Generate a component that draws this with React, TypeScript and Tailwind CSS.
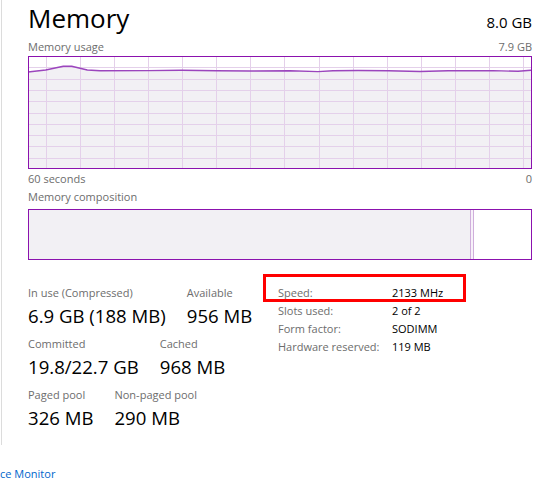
const usage: [number, number][] = [
  [0, 16],
  [17.7, 14],
  [35.3, 10.2],
  [43.7, 10.3],
  [59.3, 14],
  [72, 14.7],
  [120, 14.6],
  [153.7, 14.3],
  [188.7, 14.7],
  [222, 15],
  [262, 14.7],
  [290, 15.6],
  [305, 14.7],
  [330, 14.5],
  [360, 14.8],
  [392, 15.5],
  [420, 14.7],
  [465, 14.6],
  [490, 15.3],
  [503, 14.3],
];

const W = 504;
const H = 113;

function UsageGraph() {
  const line = usage.map(([x, y]) => `${x},${y}`).join(" ");
  const fill = `M${usage.map(([x, y]) => `${x},${y}`).join(" L")} L${W},${H} L0,${H} Z`;
  const rows = Array.from({ length: 9 }, (_, i) => Math.round(11.3 * (i + 1)) + 0.5);
  const cols = Array.from({ length: 15 }, (_, i) => Math.round(17.7 + 34.1 * i) + 0.5);
  return (
    <svg width={W} height={H} viewBox={`0 0 ${W} ${H}`} className="block">
      <path d={fill} fill="#f2f0f4" />
      {rows.map((y) => (
        <line key={`r${y}`} x1={0} x2={W} y1={y} y2={y} stroke="#e4d0ea" strokeWidth={1} />
      ))}
      {cols.map((x) => (
        <line key={`c${x}`} x1={x} x2={x} y1={0} y2={H} stroke="#e4d0ea" strokeWidth={1} />
      ))}
      <polyline points={line} fill="none" stroke="#9b45bd" strokeWidth={1.4} strokeLinejoin="round" />
      <rect x={0.5} y={0.5} width={W - 1} height={H - 1} fill="none" stroke="#8b12ae" strokeWidth={1} />
    </svg>
  );
}

function CompositionBar() {
  return (
    <div className="flex h-[51px] border border-[#8b12ae]">
      <div className="w-[441px] bg-[#f2f0f4]" />
      <div className="w-px bg-[#cfaedb]" />
      <div className="w-[2px] bg-[#f7f1f9]" />
      <div className="w-px bg-[#cfaedb]" />
      <div className="flex-1 bg-white" />
    </div>
  );
}

function Stat({ label, value }: { label: string; value: string }) {
  return (
    <div className="flex flex-col">
      <span className="text-[11px] leading-[15px] text-[#6d6d6d]">{label}</span>
      <span className="mt-[4px] text-[18.6px] leading-[24px] text-black">{value}</span>
    </div>
  );
}

const details = [
  ["Speed:", "2133 MHz"],
  ["Slots used:", "2 of 2"],
  ["Form factor:", "SODIMM"],
  ["Hardware reserved:", "119 MB"],
];

export default function App() {
  return (
    <div className="relative h-[483px] w-[553px] overflow-hidden bg-white font-['Open_Sans',sans-serif]">
      <div className="ml-px h-[445px] border-l border-[#dcdcdc] pl-[26px] pr-[21px]">
        <div className="flex h-[39px] items-baseline justify-between pt-[2px]">
          <span className="text-[26px] leading-[32px] text-black">Memory</span>
          <span className="text-[15px] leading-[20px] text-black">8.0 GB</span>
        </div>
        <div className="flex h-[17px] justify-between text-[11px] leading-[15px] text-[#6d6d6d]">
          <span>Memory usage</span>
          <span>7.9 GB</span>
        </div>
        <UsageGraph />
        <div className="mt-[2px] flex justify-between text-[11px] leading-[15px] text-[#6d6d6d]">
          <span>60 seconds</span>
          <span>0</span>
        </div>
        <div className="mt-[3px] text-[11px] leading-[15px] text-[#6d6d6d]">Memory composition</div>
        <div className="mt-[5px]">
          <CompositionBar />
        </div>
        <div className="mt-[25px] flex items-start">
          <div className="flex w-[250px] flex-col gap-y-[8px]">
            <div className="flex gap-[21px]">
              <Stat label="In use (Compressed)" value="6.9 GB (188 MB)" />
              <Stat label="Available" value="956 MB" />
            </div>
            <div className="flex gap-[21px]">
              <Stat label="Committed" value="19.8/22.7 GB" />
              <Stat label="Cached" value="968 MB" />
            </div>
            <div className="flex gap-[21px]">
              <Stat label="Paged pool" value="326 MB" />
              <Stat label="Non-paged pool" value="290 MB" />
            </div>
          </div>
          <div className="-mt-px grid grid-cols-[114px_auto] text-[11px] leading-[18px]">
            {details.map(([k, v]) => (
              <div key={k} className="contents">
                <span className="text-[#6d6d6d]">{k}</span>
                <span className="text-black">{v}</span>
              </div>
            ))}
          </div>
        </div>
      </div>
      <div className="mt-[21px] whitespace-nowrap text-[11px] leading-[15px] text-[#0066cc]">ce Monitor</div>
      <div className="absolute left-[263px] top-[274px] h-[28px] w-[203px] border-[3px] border-[#ff0000]" />
    </div>
  );
}
